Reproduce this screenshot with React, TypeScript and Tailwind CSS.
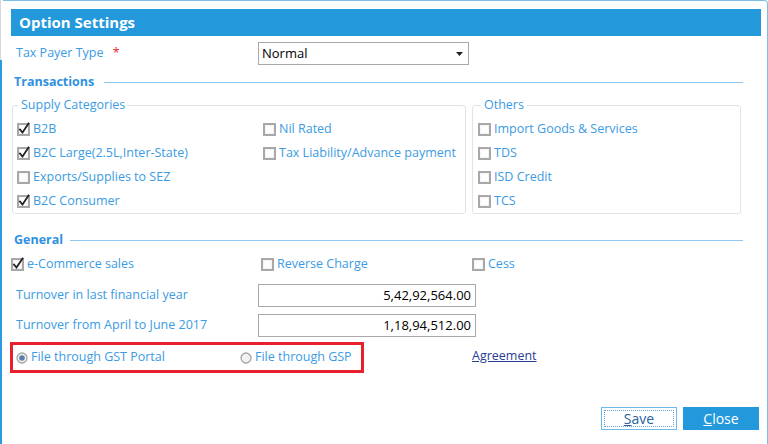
import React from "react";

const font = { fontFamily: '"Open Sans", "Noto Sans", sans-serif' };

const CheckBox = ({ checked = false }: { checked?: boolean }) => (
  <svg width="14" height="14" viewBox="0 0 14 14" className="shrink-0">
    <rect x="1" y="2" width="11" height="11" fill="#f4f4f4" stroke="#a8a8a8" strokeWidth="2" />
    <rect x="3" y="4" width="7" height="7" fill="#fdfdfd" />
    {checked && (
      <path d="M3 7.5 L5.5 10.5 L11.5 1.5" fill="none" stroke="#222" strokeWidth="1.8" strokeLinecap="square" />
    )}
  </svg>
);

const Radio = ({ checked = false }: { checked?: boolean }) => (
  <svg width="12" height="12" viewBox="0 0 12 12" className="shrink-0">
    <circle cx="6" cy="6" r="5" fill="#f2f2f2" stroke="#a5a5a5" strokeWidth="1.3" />
    {checked && <circle cx="6" cy="6" r="2.8" fill="#5b7fa8" />}
  </svg>
);

const Check = ({ label, checked, className = "" }: { label: string; checked?: boolean; className?: string }) => (
  <div className={`flex items-center gap-[2px] h-[24px] text-[12.5px] text-[#3b9be3] whitespace-nowrap ${className}`}>
    <CheckBox checked={checked} />
    <span>{label}</span>
  </div>
);

const SectionTitle = ({ title, gap }: { title: string; gap: string }) => (
  <div className="flex items-center h-[16px] pl-[3px]">
    <span className="text-[12.5px] font-bold text-[#2f91e0]">{title}</span>
    <div className={`flex-1 h-px bg-[#8fc8f2] ${gap}`} />
  </div>
);

export default function App() {
  return (
    <div className="w-[768px] h-[444px] bg-white flex overflow-hidden" style={font}>
      {/* background window edge */}
      <div className="w-[3px] flex flex-col shrink-0">
        <div className="h-[60px] bg-[#d8d8d8] w-[1px]" />
        <div className="flex-1 bg-[#2c9ae0] w-[2px]" />
      </div>

      <div className="flex-1 h-[470px] border-t border-r border-[#7fbde9] rounded-tr-[4px] bg-white">
        {/* Header */}
        <div className="mt-[8px] ml-[8px] mr-[6px] h-[27px] bg-[#2399dc] flex items-center pl-[8px]">
          <span className="text-white font-bold text-[15px]">Option Settings</span>
        </div>

        <div className="ml-[8px] w-[732px]">
          {/* Tax payer type */}
          <div className="flex items-center mt-[6px] h-[23px]">
            <div className="w-[247px] pl-[5px] text-[12.5px] text-[#3b9be3]">
              Tax Payer Type <span className="text-[#e8232b] ml-[6px]">*</span>
            </div>
            <div className="w-[211px] h-[23px] border border-[#a9a9a9] flex items-center justify-between px-[3px] bg-white">
              <span className="text-[13px] text-black">Normal</span>
              <svg width="7" height="4" viewBox="0 0 7 4" className="mr-[2px]">
                <path d="M0 0 H7 L3.5 4 Z" fill="#222" />
              </svg>
            </div>
          </div>

          {/* Transactions */}
          <div className="mt-[9px]">
            <SectionTitle title="Transactions" gap="ml-[10px]" />
          </div>

          <div className="flex gap-[6px] mt-[7px] ml-[1px]">
            <fieldset className="w-[454px] h-[117px] border border-[#dde4ea] rounded-[3px] px-[4px] pb-[1px]">
              <legend className="text-[12.5px] text-[#3b9be3] px-[3px] ml-[1px] leading-[16px]">Supply Categories</legend>
              <div className="grid grid-cols-[246px_1fr] mt-[4px]">
                <Check label="B2B" checked />
                <Check label="Nil Rated" />
                <Check label="B2C Large(2.5L,Inter-State)" checked />
                <Check label="Tax Liability/Advance payment" />
                <Check label="Exports/Supplies to SEZ" />
                <div />
                <Check label="B2C Consumer" checked />
              </div>
            </fieldset>
            <fieldset className="w-[269px] h-[117px] border border-[#dde4ea] rounded-[3px] px-[5px] pb-[1px]">
              <legend className="text-[12.5px] text-[#3b9be3] px-[3px] ml-[3px] leading-[16px]">Others</legend>
              <div className="flex flex-col mt-[4px]">
                <Check label="Import Goods & Services" />
                <Check label="TDS" />
                <Check label="ISD Credit" />
                <Check label="TCS" />
              </div>
            </fieldset>
          </div>

          {/* General */}
          <div className="mt-[18px]">
            <SectionTitle title="General" gap="ml-[7px]" />
          </div>

          <div className="flex mt-[4px]">
            <Check label="e-Commerce sales" checked className="w-[250px]" />
            <Check label="Reverse Charge" className="w-[211px]" />
            <Check label="Cess" />
          </div>

          {/* Turnover */}
          <div className="flex items-center mt-[8px] h-[23px]">
            <div className="w-[247px] pl-[5px] text-[12.5px] text-[#3b9be3]">Turnover in last financial year</div>
            <div className="w-[218px] h-[23px] border border-[#a9a9a9] flex items-center justify-end px-[4px] text-[13px] text-black">
              5,42,92,564.00
            </div>
          </div>
          <div className="flex items-center mt-[7px] h-[23px]">
            <div className="w-[247px] pl-[5px] text-[12.5px] text-[#3b9be3]">Turnover from April to June 2017</div>
            <div className="w-[218px] h-[23px] border border-[#a9a9a9] flex items-center justify-end px-[4px] text-[13px] text-black">
              1,18,94,512.00
            </div>
          </div>

          {/* Filing mode */}
          <div className="flex items-center mt-[5px]">
            <div className="w-[354px] h-[31px] ml-[-1px] border-[3px] border-[#e8202e] flex items-center pl-[3px]">
              <div className="flex items-center gap-[3px] w-[224px] text-[12.5px] text-[#3b9be3]">
                <Radio checked />
                <span>File through GST Portal</span>
              </div>
              <div className="flex items-center gap-[3px] text-[12.5px] text-[#3b9be3]">
                <Radio />
                <span>File through GSP</span>
              </div>
            </div>
            <a href="#" className="ml-[108px] mt-[-2px] text-[12.5px] text-[#2a3d96] underline">
              Agreement
            </a>
          </div>

          {/* Buttons */}
          <div className="flex justify-end gap-[6px] mt-[34px] mr-[-16px]">
            <button className="w-[76px] h-[23px] border border-[#6fb8ea] bg-white flex items-center justify-center p-[2px]">
              <span className="w-full h-full border border-dotted border-[#6a9fd0] flex items-center justify-center text-[14px] text-[#2a5f9e]">
                <span><span className="underline">S</span>ave</span>
              </span>
            </button>
            <button className="w-[76px] h-[23px] bg-[#2399dc] text-white text-[14px] flex items-center justify-center">
              <span><span className="underline">C</span>lose</span>
            </button>
          </div>
        </div>
      </div>
    </div>
  );
}
